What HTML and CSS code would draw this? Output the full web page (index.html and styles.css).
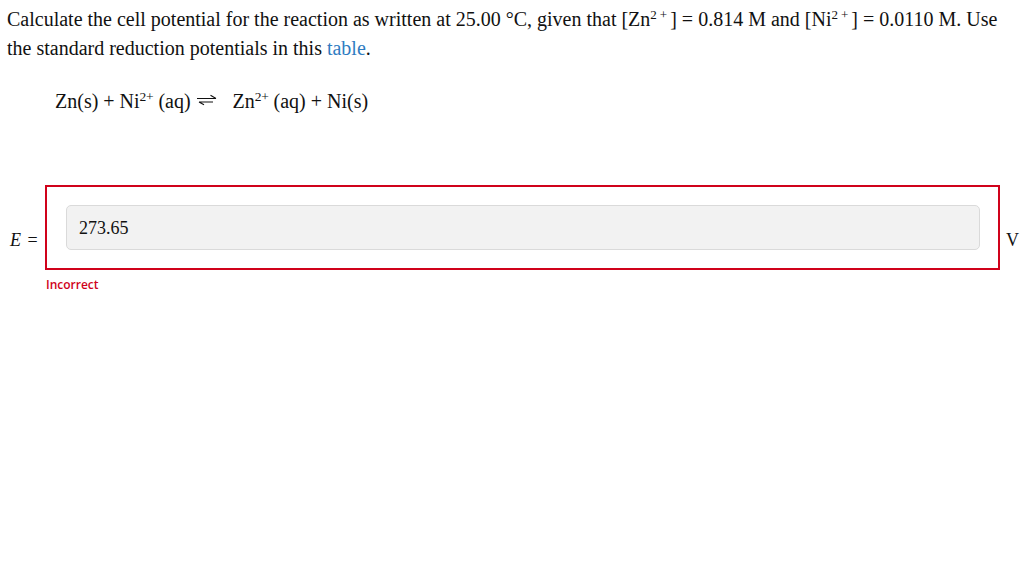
FILE: index.html
```html
<!DOCTYPE html>
<html>
<head>
<meta charset="utf-8">
<link rel="stylesheet" href="styles.css">
</head>
<body>
<div class="question">
  <p class="prompt">Calculate the cell potential for the reaction as written at 25.00 °C, given that [Zn<sup class="ion">2<span class="sp">+</span></sup>] = 0.814 M and [Ni<sup class="ion">2<span class="sp">+</span></sup>] = 0.0110 M. Use<br>the standard reduction potentials in this <a class="link" href="#">table</a>.</p>
  <div class="equation">Zn(s) + Ni<sup>2+</sup> (aq)<svg class="arrow" width="22" height="12" viewBox="0 0 22 12"><path d="M1 4.5 H20 M20 4.5 L14.5 1.2" stroke="#111" stroke-width="1.1" fill="none"/><path d="M3 8 H17 M3 8 L8 10.8" stroke="#111" stroke-width="1.1" fill="none"/></svg>Zn<sup>2+</sup> (aq) + Ni(s)</div>
  <div class="answer-row">
    <div class="label"><i>E</i> =</div>
    <div class="answer-col">
      <div class="answer-box">
        <div class="input">273.65</div>
      </div>
      <div class="feedback">Incorrect</div>
    </div>
    <div class="unit">V</div>
  </div>
</div>
</body>
</html>
```

FILE: styles.css
```css
html, body {
  margin: 0;
  padding: 0;
  background: #fff;
}
body {
  font-family: "Liberation Serif", "Times New Roman", serif;
  color: #111;
}
.question {
  padding: 5px 0 0 7px;
}
.prompt {
  margin: 0;
  font-size: 20px;
  line-height: 29px;
  padding-right: 20px;
}
.ion {
  font-size: 13px;
  line-height: 1;
  vertical-align: 7px;
  margin-right: 3px;
}
.sp {
  margin-left: 3px;
}
.link {
  color: #2f7cc1;
  text-decoration: none;
}
.equation {
  margin: 26px 0 0 48px;
  font-size: 20px;
  line-height: 24px;
  height: 24px;
}
.equation sup {
  font-size: 13.5px;
  line-height: 1;
  vertical-align: 7px;
  letter-spacing: -0.3px;
}
.arrow {
  margin: 0 15px 0 5px;
  vertical-align: 2px;
}
.answer-row {
  margin-top: 72px;
  display: flex;
  align-items: flex-start;
}
.label {
  width: 35px;
  padding-left: 3px;
  font-size: 18px;
  margin-top: 45px;
  word-spacing: 2px;
}
.answer-col {
  width: 955px;
}
.answer-box {
  border: 2px solid #d0021b;
  padding: 18px 18px 18px 19px;
}
.input {
  background: #f2f2f2;
  border: 1px solid #dadada;
  border-radius: 5px;
  height: 45px;
  box-sizing: border-box;
  padding: 11px 12px;
  font-size: 18px;
  line-height: 22px;
}
.feedback {
  font-family: "Open Sans", "Liberation Sans", sans-serif;
  font-weight: 600;
  font-size: 12px;
  color: #d0021b;
  margin: 6px 0 0 1px;
}
.unit {
  font-size: 18px;
  margin: 45px 0 0 6px;
}
```
